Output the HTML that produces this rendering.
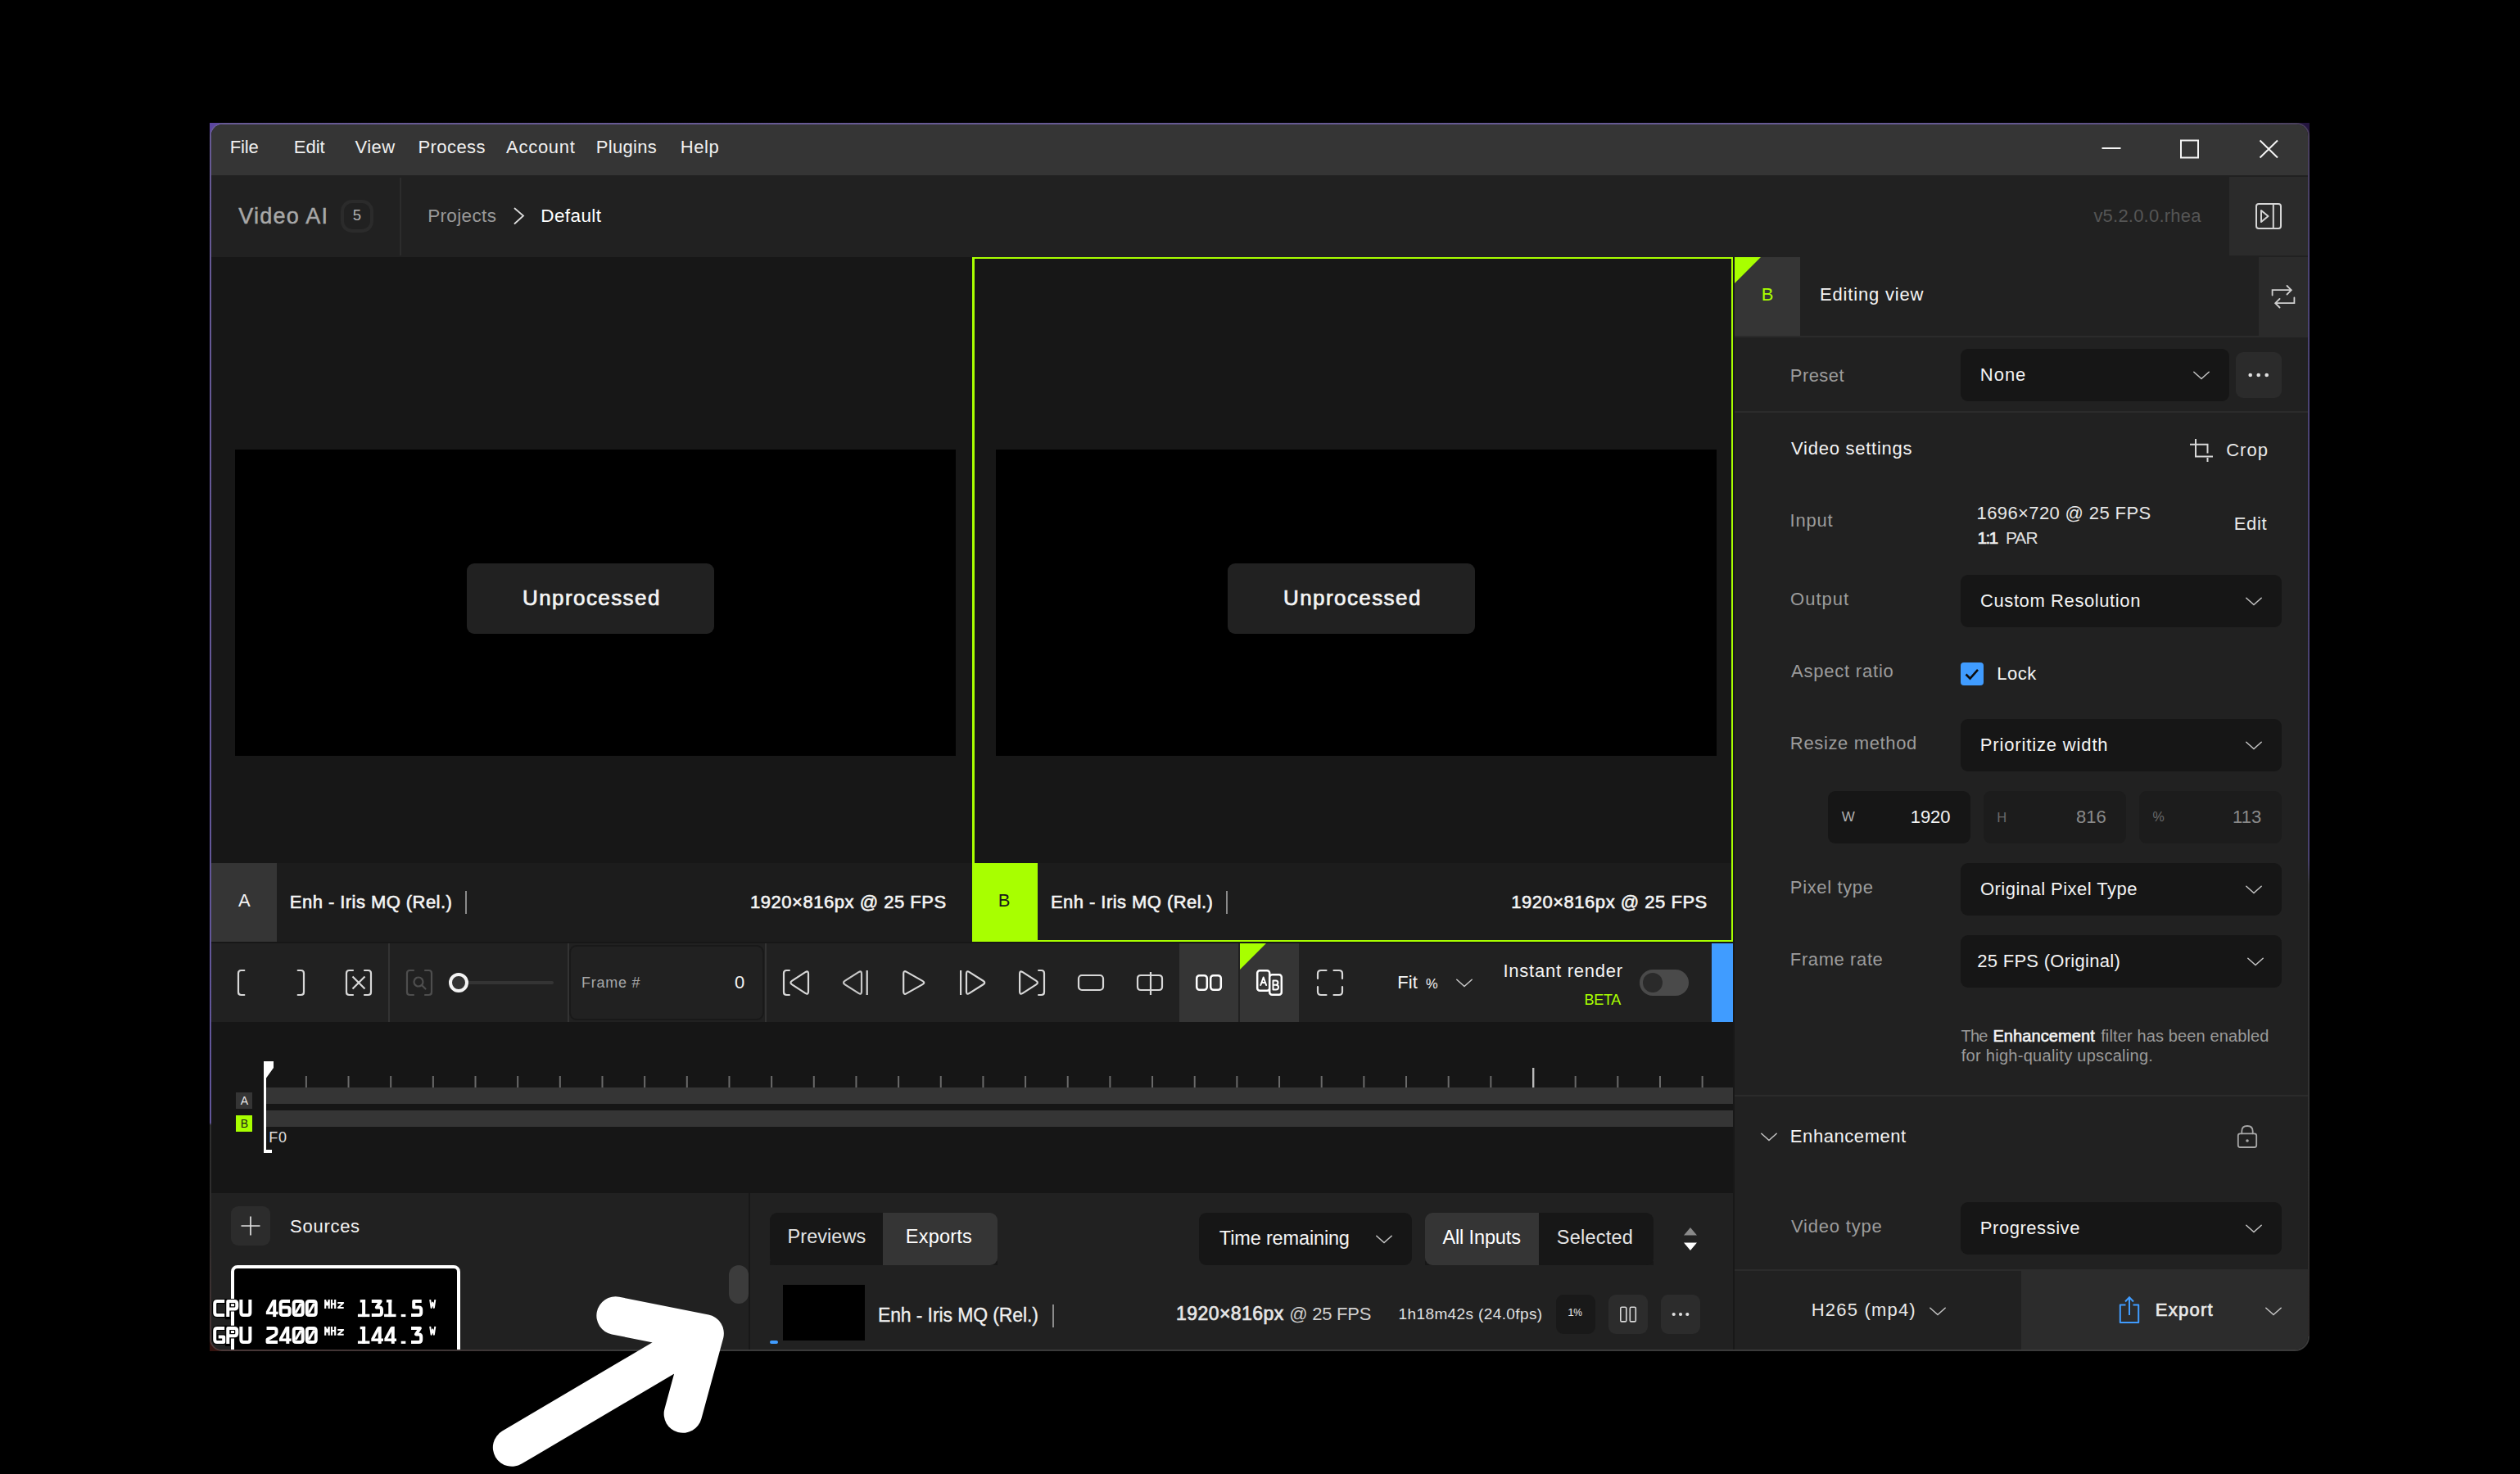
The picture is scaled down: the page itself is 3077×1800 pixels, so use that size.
<!DOCTYPE html>
<html><head><meta charset="utf-8"><title>Video AI</title>
<style>
html,body{margin:0;padding:0;background:#000;}
body{width:3077px;height:1800px;position:relative;overflow:hidden;font-family:"Liberation Sans",sans-serif;}
.a{position:absolute;box-sizing:border-box;}
.t{position:absolute;line-height:1;white-space:pre;}
#winb{position:absolute;left:256px;top:150px;width:2564px;height:1500px;border-radius:16px 16px 18px 15px;background:linear-gradient(90deg,#675a94 0%,#655992 85%,#554a78 95%,#483e58 100%) 0 0/100% 16px no-repeat,linear-gradient(90deg,#4a3838 0%,#403434 8%,#3a3a3a 20%,#3a3a3a 100%) 0 100%/100% 18px no-repeat,linear-gradient(180deg,#675a94 0%,#62569a 81.4%,#2e2e2e 81.6%,#2e2c2c 90%,#4a3636 100%) 0 0/16px 100% no-repeat,linear-gradient(180deg,#483e58 0%,#4c4474 12%,#4a4270 60%,#363638 62%,#323232 85%,#2e2a2a 100%) 100% 0/18px 100% no-repeat;}
.cn{position:absolute;width:16px;height:16px;}
#win{position:absolute;left:256px;top:150px;width:2564px;height:1500px;overflow:hidden;clip-path:inset(2px 2px 2px 2px round 14px 14px 16px 13px);}
</style></head><body>
<div class="cn" style="left:256px;top:150px;background:#5c46a0"></div><div class="cn" style="left:2804px;top:150px;background:#24153f"></div><div class="cn" style="left:256px;top:1634px;background:#35130f"></div>
<div id="winb"></div>
<div id="win">
<div class="a" style="left:0px;top:0px;width:2564px;height:1500px;background:#171717;"></div>
<div class="a" style="left:0px;top:0px;width:2564px;height:64px;background:#353535;"></div>
<div class="a" style="left:0px;top:64px;width:2564px;height:100px;background:#212121;"></div>
<div class="t" style="left:24.65px;top:18.78px;font-size:22px;color:#f0f0f0;letter-spacing:-0.158px;">File</div>
<div class="t" style="left:102.75px;top:18.78px;font-size:22px;color:#f0f0f0;">Edit</div>
<div class="t" style="left:177.60px;top:18.78px;font-size:22px;color:#f0f0f0;letter-spacing:0.408px;">View</div>
<div class="t" style="left:254.55px;top:18.78px;font-size:22px;color:#f0f0f0;letter-spacing:0.400px;">Process</div>
<div class="t" style="left:362.00px;top:18.78px;font-size:22px;color:#f0f0f0;letter-spacing:0.737px;">Account</div>
<div class="t" style="left:471.75px;top:18.78px;font-size:22px;color:#f0f0f0;letter-spacing:0.296px;">Plugins</div>
<div class="t" style="left:574.85px;top:18.78px;font-size:22px;color:#f0f0f0;letter-spacing:0.525px;">Help</div>
<svg class="a" style="left:2304px;top:10px;" width="240" height="44" viewBox="0 0 240 44" fill="none" stroke-linecap="round" stroke-linejoin="round"><g stroke="#f4f4f4" stroke-width="2" stroke-linecap="butt" stroke-linejoin="miter"><path d="M6.5 21H29.5"/><rect x="103" y="11.5" width="21" height="21"/><path d="M199.5 11.5L221 32.5M221 11.5L199.5 32.5"/></g></svg>
<div class="t" style="left:35.27px;top:101.24px;font-size:27px;color:#a8a8a8;letter-spacing:1.225px;-webkit-text-stroke:0.5px currentColor;">Video AI</div>
<div class="a" style="left:160px;top:94px;width:40px;height:40px;background:transparent;border-radius:14px;border:4px solid #2b2b2b;"></div>
<div class="t" style="left:174.67px;top:104.24px;font-size:18.5px;color:#b0b0b0;">5</div>
<div class="a" style="left:232px;top:67px;width:2px;height:95px;background:#2c2c2c;"></div>
<div class="t" style="left:266.15px;top:102.65px;font-size:22.5px;color:#999;letter-spacing:0.364px;">Projects</div>
<svg class="a" style="left:368px;top:100px;" width="20" height="28" viewBox="0 0 20 28" fill="none" stroke-linecap="round" stroke-linejoin="round"><path d="M4.5 4.5L15 13.5L4.5 23" stroke="#ddd" stroke-width="1.8" stroke-linejoin="miter"/></svg>
<div class="t" style="left:404.25px;top:102.65px;font-size:22.5px;color:#fff;letter-spacing:0.404px;">Default</div>
<div class="t" style="left:2300.40px;top:102.68px;font-size:22px;color:#555;letter-spacing:0.217px;">v5.2.0.0.rhea</div>
<div class="a" style="left:2466px;top:66px;width:96px;height:96px;background:#2b2b2b;"></div>
<svg class="a" style="left:2496px;top:96px;" width="36" height="36" viewBox="0 0 36 36" fill="none" stroke-linecap="round" stroke-linejoin="round"><g stroke="#d6d6d6" stroke-width="2"><rect x="3" y="3" width="30" height="30" rx="3"/><path d="M23.800 3V33"/><path d="M9 11L17.500 18L9 25Z"/></g></svg>
<div class="a" style="left:31px;top:399px;width:880px;height:374px;background:#000;"></div>
<div class="a" style="left:314px;top:538px;width:302px;height:86px;background:#212121;border-radius:9px;"></div>
<div class="t" style="left:382.00px;top:567.09px;font-size:26px;color:#f4f4f4;letter-spacing:1.417px;-webkit-text-stroke:0.7px currentColor;">Unprocessed</div>
<div class="a" style="left:960px;top:399px;width:880px;height:374px;background:#000;"></div>
<div class="a" style="left:1243px;top:538px;width:302px;height:86px;background:#212121;border-radius:9px;"></div>
<div class="t" style="left:1311.00px;top:567.09px;font-size:26px;color:#f4f4f4;letter-spacing:1.417px;-webkit-text-stroke:0.7px currentColor;">Unprocessed</div>
<div class="a" style="left:931px;top:164px;width:929px;height:2px;background:#a8ff00;"></div>
<div class="a" style="left:931px;top:164px;width:2.5px;height:836px;background:#a8ff00;"></div>
<div class="a" style="left:1857.5px;top:164px;width:2.5px;height:836px;background:#a8ff00;"></div>
<div class="a" style="left:2px;top:904px;width:1858px;height:96px;background:#1c1c1c;"></div>
<div class="a" style="left:2px;top:904px;width:80px;height:96px;background:#353535;"></div>
<div class="a" style="left:931px;top:904px;width:80px;height:96px;background:#a8ff00;"></div>
<div class="a" style="left:931px;top:998px;width:929px;height:2px;background:#a8ff00;"></div>
<div class="a" style="left:1857.5px;top:904px;width:2.5px;height:96px;background:#a8ff00;"></div>
<div class="t" style="left:34.90px;top:938.88px;font-size:22px;color:#f4f4f4;">A</div>
<div class="t" style="left:962.75px;top:938.88px;font-size:22px;color:#1a1a1a;">B</div>
<div class="t" style="left:97.85px;top:940.78px;font-size:22px;color:#f4f4f4;letter-spacing:0.449px;-webkit-text-stroke:0.6px currentColor;">Enh - Iris MQ (Rel.)</div>
<div class="a" style="left:312px;top:938px;width:2px;height:28px;background:#8a8a8a;"></div>
<div class="t" style="left:660.08px;top:940.78px;font-size:22px;color:#f4f4f4;letter-spacing:0.526px;-webkit-text-stroke:0.6px currentColor;">1920×816px @ 25 FPS</div>
<div class="t" style="left:1026.95px;top:940.78px;font-size:22px;color:#f4f4f4;letter-spacing:0.449px;-webkit-text-stroke:0.6px currentColor;">Enh - Iris MQ (Rel.)</div>
<div class="a" style="left:1241.1px;top:938px;width:2px;height:28px;background:#8a8a8a;"></div>
<div class="t" style="left:1589.18px;top:940.78px;font-size:22px;color:#f4f4f4;letter-spacing:0.526px;-webkit-text-stroke:0.6px currentColor;">1920×816px @ 25 FPS</div>
<div class="a" style="left:2px;top:1002px;width:1858px;height:96px;background:#212121;"></div>
<div class="a" style="left:218px;top:1002px;width:2px;height:96px;background:#333;"></div>
<div class="a" style="left:437px;top:1002px;width:2px;height:96px;background:#333;"></div>
<div class="a" style="left:678px;top:1002px;width:2px;height:96px;background:#333;"></div>
<div class="a" style="left:439px;top:1004px;width:238px;height:92px;background:#212121;border-radius:9px;border:2px solid #191919;"></div>
<svg class="a" style="left:20.5px;top:1032px;" width="36" height="36" viewBox="0 0 36 36" fill="none" stroke-linecap="round" stroke-linejoin="round"><g stroke="#d8d8d8" stroke-width="2.2" transform="translate(2 2)"><path d="M19.300 1H15.500Q12 1 12 4.500V27.500Q12 31 15.500 31H19.300"/></g></svg>
<svg class="a" style="left:92.5px;top:1032px;" width="36" height="36" viewBox="0 0 36 36" fill="none" stroke-linecap="round" stroke-linejoin="round"><g stroke="#d8d8d8" stroke-width="2.2" transform="translate(2 2)"><path d="M12.700 1H16.500Q20 1 20 4.500V27.500Q20 31 16.500 31H12.700"/></g></svg>
<svg class="a" style="left:164px;top:1032px;" width="36" height="36" viewBox="0 0 36 36" fill="none" stroke-linecap="round" stroke-linejoin="round"><g stroke="#d8d8d8" stroke-width="2.2" transform="translate(2 2)"><path d="M9 1H4.5Q1 1 1 4.5V27.5Q1 31 4.5 31H9"/><path d="M23 1H27.5Q31 1 31 4.5V27.5Q31 31 27.5 31H23"/><path d="M8.5 8.5L23.5 23.5M23.5 8.5L8.5 23.5" stroke-linecap="butt"/></g></svg>
<svg class="a" style="left:238px;top:1032px;" width="36" height="36" viewBox="0 0 36 36" fill="none" stroke-linecap="round" stroke-linejoin="round"><g stroke="#4e4e4e" stroke-width="2.2" transform="translate(2 2)"><path d="M9 1H4.5Q1 1 1 4.5V27.5Q1 31 4.5 31H9"/><path d="M23 1H27.5Q31 1 31 4.5V27.5Q31 31 27.5 31H23"/><circle cx="15" cy="15" r="5.5"/><path d="M19.5 19.5L23.5 23.5"/></g></svg>
<div class="a" style="left:304px;top:1048px;width:116px;height:4px;background:#343434;border-radius:2px;"></div>
<div class="a" style="left:292px;top:1038px;width:24px;height:24px;border-radius:50%;background:#333;border:4.5px solid #f4f4f4;"></div>
<div class="t" style="left:454.02px;top:1041.26px;font-size:18px;color:#a8a8a8;letter-spacing:0.746px;">Frame #</div>
<div class="t" style="left:641.05px;top:1038.98px;font-size:22px;color:#f4f4f4;">0</div>
<svg class="a" style="left:698px;top:1032px;" width="36" height="36" viewBox="0 0 36 36" fill="none" stroke-linecap="round" stroke-linejoin="round"><g stroke="#d8d8d8" stroke-width="2.2" transform="translate(2 2)"><path d="M7.900 1H4.500Q1 1 1 4.500V27.500Q1 31 4.500 31H7.900"/><path d="M11.21 18.34Q7.60 16.00 11.21 13.66L27.39 3.14Q31.00 0.80 31.00 5.10L31.00 26.90Q31.00 31.20 27.39 28.86Z"/></g></svg>
<svg class="a" style="left:770px;top:1032px;" width="36" height="36" viewBox="0 0 36 36" fill="none" stroke-linecap="round" stroke-linejoin="round"><g stroke="#d8d8d8" stroke-width="2.2" transform="translate(2 2)"><path d="M3.82 18.31Q0.20 16.00 3.82 13.69L20.38 3.11Q24.00 0.80 24.00 5.10L24.00 26.90Q24.00 31.20 20.38 28.89Z" stroke="#c8c8c8"/><path d="M30.700 1V31" stroke-linecap="butt"/></g></svg>
<svg class="a" style="left:842px;top:1032px;" width="36" height="36" viewBox="0 0 36 36" fill="none" stroke-linecap="round" stroke-linejoin="round"><g stroke="#d8d8d8" stroke-width="2.2" transform="translate(2 2)"><path d="M26.45 18.11Q30.20 16.00 26.45 13.89L6.95 2.91Q3.20 0.80 3.20 5.10L3.20 26.90Q3.20 31.20 6.95 29.09Z"/></g></svg>
<svg class="a" style="left:914px;top:1032px;" width="36" height="36" viewBox="0 0 36 36" fill="none" stroke-linecap="round" stroke-linejoin="round"><g stroke="#d8d8d8" stroke-width="2.2" transform="translate(2 2)"><path d="M1.100 1V31" stroke-linecap="butt"/><path d="M28.46 18.29Q32.10 16.00 28.46 13.71L11.64 3.09Q8.00 0.80 8.00 5.10L8.00 26.90Q8.00 31.20 11.64 28.91Z"/></g></svg>
<svg class="a" style="left:986px;top:1032px;" width="36" height="36" viewBox="0 0 36 36" fill="none" stroke-linecap="round" stroke-linejoin="round"><g stroke="#d8d8d8" stroke-width="2.2" transform="translate(2 2)"><path d="M24.100 1H27.500Q31 1 31 4.500V27.500Q31 31 27.500 31H24.100"/><path d="M21.08 18.33Q24.70 16.00 21.08 13.67L4.72 3.13Q1.10 0.80 1.10 5.10L1.10 26.90Q1.10 31.20 4.72 28.87Z"/></g></svg>
<svg class="a" style="left:1058px;top:1032px;" width="36" height="36" viewBox="0 0 36 36" fill="none" stroke-linecap="round" stroke-linejoin="round"><g stroke="#d8d8d8" stroke-width="2.2" transform="translate(2 2)"><rect x="1" y="7" width="30" height="18" rx="4"/></g></svg>
<svg class="a" style="left:1130px;top:1032px;" width="36" height="36" viewBox="0 0 36 36" fill="none" stroke-linecap="round" stroke-linejoin="round"><g stroke="#d8d8d8" stroke-width="2.2" transform="translate(2 2)"><path d="M17 7H5Q1 7 1 11V21Q1 25 5 25H17"/><path d="M17 7H27Q31 7 31 11V21Q31 25 27 25H17"/><path d="M17 3V31" stroke-linecap="butt"/></g></svg>
<div class="a" style="left:1184px;top:1002px;width:72px;height:96px;background:#353535;"></div>
<div class="a" style="left:1258px;top:1002px;width:72px;height:96px;background:#353535;"></div>
<svg class="a" style="left:1202px;top:1032px;" width="36" height="36" viewBox="0 0 36 36" fill="none" stroke-linecap="round" stroke-linejoin="round"><g stroke="#fff" stroke-width="2.5" transform="translate(2 2)"><rect x="1.200" y="7.200" width="12.6" height="17.6" rx="3.5"/><rect x="18.2" y="7.2" width="12.6" height="17.6" rx="3.5"/></g></svg>
<svg class="a" style="left:1258px;top:1002px" width="32" height="32" viewBox="0 0 32 32"><path d="M0 0H32L0 32Z" fill="#a8ff00"/></svg>
<svg class="a" style="left:1276px;top:1032px;" width="36" height="36" viewBox="0 0 36 36" fill="none" stroke-linecap="round" stroke-linejoin="round"><g stroke="#fff" stroke-width="2.5" transform="translate(2 2)"><rect x="1.200" y="1.200" width="15" height="24.6" rx="3"/><rect x="16.2" y="6.2" width="14.6" height="24.6" rx="3" fill="#353535"/><path d="M5.300 19L8.700 9.500L12.100 19M6.400 16H11" stroke-width="2"/><path d="M20.500 24.500V13.500H24Q26.400 13.500 26.400 16.100Q26.400 18.600 24 18.700H20.500M24 18.700Q27 18.800 27 21.600Q27 24.500 24 24.500H20.500" stroke-width="2"/></g></svg>
<svg class="a" style="left:1350px;top:1032px;" width="36" height="36" viewBox="0 0 36 36" fill="none" stroke-linecap="round" stroke-linejoin="round"><g stroke="#d8d8d8" stroke-width="2.2" transform="translate(2 2)"><path d="M1 11V5Q1 1 5 1H11.500M20.500 1H27Q31 1 31 5V11M31 21V27Q31 31 27 31H20.500M11.500 31H5Q1 31 1 27V21"/></g></svg>
<div class="t" style="left:1450.15px;top:1038.98px;font-size:22px;color:#f4f4f4;letter-spacing:0.137px;">Fit</div>
<div class="t" style="left:1485.10px;top:1043.23px;font-size:16.5px;color:#f4f4f4;">%</div>
<svg class="a" style="left:1520px;top:1042px;" width="24" height="16" viewBox="0 0 24 16" fill="none" stroke-linecap="round" stroke-linejoin="round"><path d="M2.800 4.200L12 12.600L21.200 4.200" stroke="#c8c8c8" stroke-width="1.500" stroke-linejoin="miter"/></svg>
<div class="t" style="left:1579.40px;top:1024.98px;font-size:22px;color:#f4f4f4;letter-spacing:0.771px;">Instant render</div>
<div class="t" style="left:1678.62px;top:1062.06px;font-size:18px;color:#a8ff00;letter-spacing:-0.350px;">BETA</div>
<div class="a" style="left:1746px;top:1034px;width:60px;height:32px;background:#4a4a4a;border-radius:16px;"></div>
<div class="a" style="left:1750px;top:1038px;width:24px;height:24px;background:#2a2a2a;border-radius:12px;"></div>
<div class="a" style="left:1834px;top:1002px;width:26px;height:96px;background:#409cff;"></div>
<div class="a" style="left:2px;top:1098px;width:1858px;height:209px;background:#161616;"></div>
<svg class="a" style="left:2px;top:1146px;" width="1858" height="32" viewBox="0 0 1858 32" fill="none" stroke-linecap="round" stroke-linejoin="round"><rect x="114.86" y="18" width="2" height="14" fill="#6a6a6a"/><rect x="166.52" y="18" width="2" height="14" fill="#6a6a6a"/><rect x="218.18" y="18" width="2" height="14" fill="#6a6a6a"/><rect x="269.84" y="18" width="2" height="14" fill="#6a6a6a"/><rect x="321.50" y="18" width="2" height="14" fill="#6a6a6a"/><rect x="373.16" y="18" width="2" height="14" fill="#6a6a6a"/><rect x="424.82" y="18" width="2" height="14" fill="#6a6a6a"/><rect x="476.48" y="18" width="2" height="14" fill="#6a6a6a"/><rect x="528.14" y="18" width="2" height="14" fill="#6a6a6a"/><rect x="579.80" y="18" width="2" height="14" fill="#6a6a6a"/><rect x="631.46" y="18" width="2" height="14" fill="#6a6a6a"/><rect x="683.12" y="18" width="2" height="14" fill="#6a6a6a"/><rect x="734.78" y="18" width="2" height="14" fill="#6a6a6a"/><rect x="786.44" y="18" width="2" height="14" fill="#6a6a6a"/><rect x="838.10" y="18" width="2" height="14" fill="#6a6a6a"/><rect x="889.76" y="18" width="2" height="14" fill="#6a6a6a"/><rect x="941.42" y="18" width="2" height="14" fill="#6a6a6a"/><rect x="993.08" y="18" width="2" height="14" fill="#6a6a6a"/><rect x="1044.74" y="18" width="2" height="14" fill="#6a6a6a"/><rect x="1096.40" y="18" width="2" height="14" fill="#6a6a6a"/><rect x="1148.06" y="18" width="2" height="14" fill="#6a6a6a"/><rect x="1199.72" y="18" width="2" height="14" fill="#6a6a6a"/><rect x="1251.38" y="18" width="2" height="14" fill="#6a6a6a"/><rect x="1303.04" y="18" width="2" height="14" fill="#6a6a6a"/><rect x="1354.70" y="18" width="2" height="14" fill="#6a6a6a"/><rect x="1406.36" y="18" width="2" height="14" fill="#6a6a6a"/><rect x="1458.02" y="18" width="2" height="14" fill="#6a6a6a"/><rect x="1509.68" y="18" width="2" height="14" fill="#6a6a6a"/><rect x="1561.34" y="18" width="2" height="14" fill="#6a6a6a"/><rect x="1613.00" y="8" width="2.4" height="24" fill="#b8b8b8"/><rect x="1664.66" y="18" width="2" height="14" fill="#6a6a6a"/><rect x="1716.32" y="18" width="2" height="14" fill="#6a6a6a"/><rect x="1767.98" y="18" width="2" height="14" fill="#6a6a6a"/><rect x="1819.64" y="18" width="2" height="14" fill="#6a6a6a"/></svg>
<div class="a" style="left:68px;top:1178px;width:1792px;height:20px;background:#353535;"></div>
<div class="a" style="left:68px;top:1206px;width:1792px;height:20px;background:#353535;"></div>
<div class="a" style="left:32px;top:1184px;width:20px;height:20px;background:#353535;"></div>
<div class="a" style="left:32px;top:1212px;width:20px;height:20px;background:#a8ff00;"></div>
<div class="t" style="left:37.70px;top:1187.35px;font-size:14px;color:#e8e8e8;">A</div>
<div class="t" style="left:37.68px;top:1215.35px;font-size:14px;color:#1a1a1a;">B</div>
<svg class="a" style="left:66px;top:1146px;" width="14" height="112" viewBox="0 0 14 112" fill="none" stroke-linecap="round" stroke-linejoin="round"><path d="M0 0H12V8L3 20.500V108H10V112H0Z" fill="#fff"/></svg>
<div class="t" style="left:72.23px;top:1230.26px;font-size:18px;color:#e0e0e0;letter-spacing:0.900px;">F0</div>
<div class="a" style="left:2px;top:1307px;width:1858px;height:193px;background:#212121;"></div>
<div class="a" style="left:658px;top:1307px;width:2px;height:193px;background:#181818;"></div>
<div class="a" style="left:26px;top:1323px;width:48px;height:48px;background:#2c2c2c;border-radius:9px;"></div>
<svg class="a" style="left:38px;top:1335px;" width="24" height="24" viewBox="0 0 24 24" fill="none" stroke-linecap="round" stroke-linejoin="round"><path d="M12 0.500V23.500M0.500 12H23.500" stroke="#e0e0e0" stroke-width="1.700" stroke-linecap="butt"/></svg>
<div class="t" style="left:98.10px;top:1336.68px;font-size:22px;color:#f4f4f4;letter-spacing:0.717px;">Sources</div>
<div class="a" style="left:26px;top:1395px;width:280px;height:115px;background:#000;border-radius:8px;border:4px solid #fff;"></div>
<div class="a" style="left:634px;top:1395px;width:24px;height:47px;background:#3c3c3c;border-radius:12px;"></div>
<div class="a" style="left:684px;top:1390px;width:278px;height:5px;background:#181818;"></div>
<div class="a" style="left:684px;top:1331px;width:278px;height:64px;background:#171717;border-radius:9px;"></div>
<div class="a" style="left:822px;top:1331px;width:140px;height:64px;background:#353535;border-radius:9px;border-top-left-radius:0;border-bottom-left-radius:0;"></div>
<div class="t" style="left:705.62px;top:1348.91px;font-size:23.5px;color:#e4e4e4;letter-spacing:0.036px;">Previews</div>
<div class="t" style="left:849.83px;top:1348.91px;font-size:23.5px;color:#fff;letter-spacing:0.200px;">Exports</div>
<div class="a" style="left:1208px;top:1331px;width:260px;height:64px;background:#161616;border-radius:9px;"></div>
<div class="t" style="left:1232.80px;top:1350.91px;font-size:23.5px;color:#f4f4f4;letter-spacing:-0.148px;">Time remaining</div>
<svg class="a" style="left:1422px;top:1355px;" width="24" height="16" viewBox="0 0 24 16" fill="none" stroke-linecap="round" stroke-linejoin="round"><path d="M2.800 4.200L12 12.600L21.200 4.200" stroke="#c8c8c8" stroke-width="1.500" stroke-linejoin="miter"/></svg>
<div class="a" style="left:1484px;top:1390px;width:279px;height:5px;background:#181818;"></div>
<div class="a" style="left:1484px;top:1331px;width:279px;height:64px;background:#171717;border-radius:9px;"></div>
<div class="a" style="left:1484px;top:1331px;width:139px;height:64px;background:#353535;border-radius:9px;border-top-right-radius:0;border-bottom-right-radius:0;"></div>
<div class="t" style="left:1505.40px;top:1349.51px;font-size:23.5px;color:#fff;letter-spacing:-0.119px;">All Inputs</div>
<div class="t" style="left:1644.80px;top:1349.51px;font-size:23.5px;color:#e4e4e4;letter-spacing:0.214px;">Selected</div>
<svg class="a" style="left:1798px;top:1347px;" width="20" height="32" viewBox="0 0 20 32" fill="none" stroke-linecap="round" stroke-linejoin="round"><path d="M2 11.500L10 2L18 11.500Z" fill="#8a8a8a"/><path d="M2 20.500L10 30L18 20.500Z" fill="#fff"/></svg>
<div class="a" style="left:700px;top:1419px;width:100px;height:68px;background:#000;"></div>
<div class="a" style="left:684px;top:1487px;width:10px;height:4px;background:#409cff;border-radius:2px;"></div>
<div class="t" style="left:815.92px;top:1444.93px;font-size:23px;color:#f0f0f0;letter-spacing:-0.108px;-webkit-text-stroke:0.3px currentColor;">Enh - Iris MQ (Rel.)</div>
<div class="a" style="left:1029px;top:1443px;width:2px;height:28px;background:#8a8a8a;"></div>
<div class="t" style="left:1179.95px;top:1442.83px;font-size:23px;color:#e6e6e6;letter-spacing:0.450px;-webkit-text-stroke:0.7px currentColor;">1920×816px</div>
<div class="t" style="left:1318.28px;top:1443.68px;font-size:22px;color:#d0d0d0;letter-spacing:-0.236px;">@ 25 FPS</div>
<div class="t" style="left:1451.62px;top:1444.72px;font-size:19px;color:#e0e0e0;letter-spacing:0.382px;">1h18m42s (24.0fps)</div>
<div class="a" style="left:1644px;top:1431px;width:48px;height:48px;background:#191919;border-radius:9px;"></div>
<div class="t" style="left:1658.20px;top:1445.57px;font-size:13.5px;color:#e8e8e8;">1</div>
<div class="t" style="left:1665.33px;top:1446.64px;font-size:12px;color:#e8e8e8;">%</div>
<div class="a" style="left:1708px;top:1431px;width:48px;height:48px;background:#2c2c2c;border-radius:9px;"></div>
<svg class="a" style="left:1720px;top:1443px;" width="24" height="24" viewBox="0 0 24 24" fill="none" stroke-linecap="round" stroke-linejoin="round"><rect x="2.800" y="3.300" width="7" height="17.600" rx="1.500" stroke="#d8d8d8" stroke-width="1.600"/><rect x="14.300" y="3.300" width="7" height="17.600" rx="1.500" stroke="#d8d8d8" stroke-width="1.600"/></svg>
<div class="a" style="left:1772px;top:1431px;width:48px;height:48px;background:#2c2c2c;border-radius:9px;"></div>
<svg class="a" style="left:1784px;top:1449px;" width="24" height="12" viewBox="0 0 24 12" fill="none" stroke-linecap="round" stroke-linejoin="round"><circle cx="3.700" cy="6" r="2.100" fill="#e0e0e0"/><circle cx="12" cy="6" r="2.100" fill="#e0e0e0"/><circle cx="20.300" cy="6" r="2.100" fill="#e0e0e0"/></svg>
<div class="a" style="left:1860px;top:164px;width:2px;height:1336px;background:#181818;"></div>
<div class="a" style="left:1862px;top:164px;width:702px;height:1336px;background:#212121;"></div>
<div class="a" style="left:1862px;top:164px;width:80px;height:96px;background:#353535;"></div>
<svg class="a" style="left:1862px;top:164px" width="32" height="32" viewBox="0 0 32 32"><path d="M0 0H32L0 32Z" fill="#a8ff00"/></svg>
<div class="t" style="left:1894.65px;top:198.78px;font-size:22px;color:#a8ff00;">B</div>
<div class="t" style="left:1966.05px;top:198.78px;font-size:22px;color:#f4f4f4;letter-spacing:0.814px;">Editing view</div>
<div class="a" style="left:2502px;top:164px;width:62px;height:96px;background:#2b2b2b;"></div>
<div class="a" style="left:1862px;top:260px;width:702px;height:2px;background:#2b2b2b;"></div>
<svg class="a" style="left:2516px;top:196px;" width="32" height="32" viewBox="0 0 32 32" fill="none" stroke-linecap="round" stroke-linejoin="round"><g stroke="#d0d0d0" stroke-width="1.800" stroke-linejoin="miter"><path d="M2.600 14.500V8.200H25.500M20.500 3L25.800 8.200L20.500 13.500"/><path d="M29.400 17.500V24.200H6.500M11.500 19L6.200 24.200L11.500 29.500"/></g></svg>
<div class="t" style="left:1929.85px;top:298.28px;font-size:22px;color:#9c9c9c;letter-spacing:0.430px;">Preset</div>
<div class="a" style="left:2138px;top:276px;width:328px;height:64px;background:#161616;border-radius:9px;"></div>
<div class="t" style="left:2161.85px;top:296.88px;font-size:22px;color:#f4f4f4;letter-spacing:0.967px;">None</div>
<svg class="a" style="left:2420px;top:300px;" width="24" height="16" viewBox="0 0 24 16" fill="none" stroke-linecap="round" stroke-linejoin="round"><path d="M2.800 4.200L12 12.600L21.200 4.200" stroke="#c4c4c4" stroke-width="1.500" stroke-linejoin="miter"/></svg>
<div class="a" style="left:2474px;top:280px;width:56px;height:56px;background:#2b2b2b;border-radius:9px;"></div>
<svg class="a" style="left:2488px;top:302px;" width="28" height="12" viewBox="0 0 28 12" fill="none" stroke-linecap="round" stroke-linejoin="round"><circle cx="3.700" cy="6" r="2.300" fill="#e0e0e0"/><circle cx="13.700" cy="6" r="2.300" fill="#e0e0e0"/><circle cx="23.700" cy="6" r="2.300" fill="#e0e0e0"/></svg>
<div class="a" style="left:1862px;top:351.5px;width:702px;height:2px;background:#2b2b2b;"></div>
<div class="t" style="left:1931.00px;top:386.98px;font-size:22px;color:#f4f4f4;letter-spacing:0.752px;">Video settings</div>
<svg class="a" style="left:2416px;top:384px;" width="32" height="32" viewBox="0 0 32 32" fill="none" stroke-linecap="round" stroke-linejoin="round"><g stroke="#d8d8d8" stroke-width="2" stroke-linecap="butt" stroke-linejoin="miter"><path d="M9 2V23.500H30"/><path d="M2 8.700H23.500V19.500M23.500 25V30"/></g></svg>
<div class="t" style="left:2462.20px;top:389.48px;font-size:22px;color:#e8e8e8;letter-spacing:1.042px;">Crop</div>
<div class="t" style="left:1929.60px;top:475.28px;font-size:22px;color:#9c9c9c;letter-spacing:0.756px;">Input</div>
<div class="t" style="left:2157.57px;top:465.58px;font-size:22px;color:#e8e8e8;letter-spacing:0.383px;">1696×720 @ 25 FPS</div>
<div class="t" style="left:2158.50px;top:496.22px;font-size:21px;color:#f0f0f0;letter-spacing:-1.775px;-webkit-text-stroke:0.6px currentColor;">1:1</div>
<div class="t" style="left:2192.88px;top:496.22px;font-size:21px;color:#e0e0e0;letter-spacing:-0.963px;">PAR</div>
<div class="t" style="left:2471.75px;top:478.78px;font-size:22px;color:#e8e8e8;letter-spacing:0.667px;">Edit</div>
<div class="a" style="left:2138px;top:552px;width:392px;height:64px;background:#161616;border-radius:9px;"></div>
<div class="t" style="left:1930.00px;top:570.98px;font-size:22px;color:#9c9c9c;letter-spacing:1.025px;">Output</div>
<div class="t" style="left:2162.00px;top:573.08px;font-size:22px;color:#f4f4f4;letter-spacing:0.594px;">Custom Resolution</div>
<svg class="a" style="left:2484px;top:576px;" width="24" height="16" viewBox="0 0 24 16" fill="none" stroke-linecap="round" stroke-linejoin="round"><path d="M2.800 4.200L12 12.600L21.200 4.200" stroke="#c4c4c4" stroke-width="1.500" stroke-linejoin="miter"/></svg>
<div class="t" style="left:1931.00px;top:659.08px;font-size:22px;color:#9c9c9c;letter-spacing:0.784px;">Aspect ratio</div>
<div class="a" style="left:2138px;top:659px;width:28px;height:28px;background:#409cff;border-radius:4px;"></div>
<svg class="a" style="left:2138px;top:659px;" width="28" height="28" viewBox="0 0 28 28" fill="none" stroke-linecap="round" stroke-linejoin="round"><path d="M6.500 14.500L11.500 19.500L21 8.800" stroke="#0d0d0d" stroke-width="2.600" stroke-linejoin="miter" stroke-linecap="butt"/></svg>
<div class="t" style="left:2182.25px;top:661.78px;font-size:22px;color:#f4f4f4;letter-spacing:0.542px;">Lock</div>
<div class="a" style="left:2138px;top:728px;width:392px;height:64px;background:#161616;border-radius:9px;"></div>
<div class="t" style="left:1929.85px;top:746.88px;font-size:22px;color:#9c9c9c;letter-spacing:0.648px;">Resize method</div>
<div class="t" style="left:2161.85px;top:748.68px;font-size:22px;color:#f4f4f4;letter-spacing:0.847px;">Prioritize width</div>
<svg class="a" style="left:2484px;top:752px;" width="24" height="16" viewBox="0 0 24 16" fill="none" stroke-linecap="round" stroke-linejoin="round"><path d="M2.800 4.200L12 12.600L21.200 4.200" stroke="#c4c4c4" stroke-width="1.500" stroke-linejoin="miter"/></svg>
<div class="a" style="left:1976px;top:816px;width:174px;height:64px;background:#161616;border-radius:9px;"></div>
<div class="a" style="left:2166px;top:816px;width:174px;height:64px;background:#1c1c1c;border-radius:9px;"></div>
<div class="a" style="left:2356px;top:816px;width:174px;height:64px;background:#1c1c1c;border-radius:9px;"></div>
<div class="t" style="left:1992.70px;top:839.21px;font-size:17px;color:#b0b0b0;">W</div>
<div class="t" style="left:2076.65px;top:837.38px;font-size:22px;color:#f4f4f4;">1920</div>
<div class="t" style="left:2182.35px;top:839.63px;font-size:16.5px;color:#6a6a6a;">H</div>
<div class="t" style="left:2279.03px;top:837.38px;font-size:22px;color:#8a8a8a;">816</div>
<div class="t" style="left:2372.50px;top:840.06px;font-size:16px;color:#6a6a6a;">%</div>
<div class="t" style="left:2470.05px;top:837.38px;font-size:22px;color:#8a8a8a;">113</div>
<div class="a" style="left:2138px;top:904px;width:392px;height:64px;background:#161616;border-radius:9px;"></div>
<div class="t" style="left:1929.85px;top:922.78px;font-size:22px;color:#9c9c9c;letter-spacing:0.628px;">Pixel type</div>
<div class="t" style="left:2162.00px;top:925.08px;font-size:22px;color:#f4f4f4;letter-spacing:0.465px;">Original Pixel Type</div>
<svg class="a" style="left:2484px;top:928px;" width="24" height="16" viewBox="0 0 24 16" fill="none" stroke-linecap="round" stroke-linejoin="round"><path d="M2.800 4.200L12 12.600L21.200 4.200" stroke="#c4c4c4" stroke-width="1.500" stroke-linejoin="miter"/></svg>
<div class="a" style="left:2138px;top:992px;width:392px;height:64px;background:#161616;border-radius:9px;"></div>
<div class="t" style="left:1929.85px;top:1010.98px;font-size:22px;color:#9c9c9c;letter-spacing:0.600px;">Frame rate</div>
<div class="t" style="left:2158.20px;top:1013.28px;font-size:22px;color:#f4f4f4;letter-spacing:0.292px;">25 FPS (Original)</div>
<svg class="a" style="left:2486px;top:1016px;" width="24" height="16" viewBox="0 0 24 16" fill="none" stroke-linecap="round" stroke-linejoin="round"><path d="M2.800 4.200L12 12.600L21.200 4.200" stroke="#c4c4c4" stroke-width="1.500" stroke-linejoin="miter"/></svg>
<div class="t" style="left:2138.62px;top:1105.07px;font-size:20px;color:#9a9a9a;letter-spacing:-0.875px;">The</div>
<div class="t" style="left:2177.38px;top:1105.07px;font-size:20px;color:#f4f4f4;letter-spacing:0.105px;-webkit-text-stroke:0.6px currentColor;">Enhancement</div>
<div class="t" style="left:2309.15px;top:1105.07px;font-size:20px;color:#9a9a9a;letter-spacing:0.128px;">filter has been enabled</div>
<div class="t" style="left:2138.75px;top:1128.57px;font-size:20px;color:#9a9a9a;letter-spacing:0.283px;">for high-quality upscaling.</div>
<div class="a" style="left:1862px;top:1187px;width:702px;height:2px;background:#2b2b2b;"></div>
<svg class="a" style="left:1892px;top:1230px;" width="24" height="16" viewBox="0 0 24 16" fill="none" stroke-linecap="round" stroke-linejoin="round"><path d="M2.800 4.200L12 12.600L21.200 4.200" stroke="#c4c4c4" stroke-width="1.500" stroke-linejoin="miter"/></svg>
<div class="t" style="left:1929.85px;top:1226.78px;font-size:22px;color:#f4f4f4;letter-spacing:0.562px;">Enhancement</div>
<svg class="a" style="left:2472px;top:1222px;" width="32" height="32" viewBox="0 0 32 32" fill="none" stroke-linecap="round" stroke-linejoin="round"><g stroke="#a8a8a8" stroke-width="1.800"><rect x="4.800" y="12.300" width="22.400" height="16.700" rx="2.500"/><path d="M9.300 12.300V9.500Q9.300 3 16 3Q22.700 3 22.700 9.500V12.300"/></g><circle cx="16" cy="21" r="1.800" fill="#a8a8a8"/></svg>
<div class="a" style="left:2138px;top:1318px;width:392px;height:64px;background:#161616;border-radius:9px;"></div>
<div class="t" style="left:1931.00px;top:1337.28px;font-size:22px;color:#9c9c9c;letter-spacing:0.806px;">Video type</div>
<div class="t" style="left:2161.85px;top:1339.18px;font-size:22px;color:#f4f4f4;letter-spacing:0.540px;">Progressive</div>
<svg class="a" style="left:2484px;top:1342px;" width="24" height="16" viewBox="0 0 24 16" fill="none" stroke-linecap="round" stroke-linejoin="round"><path d="M2.800 4.200L12 12.600L21.200 4.200" stroke="#c4c4c4" stroke-width="1.500" stroke-linejoin="miter"/></svg>
<div class="a" style="left:1862px;top:1400px;width:702px;height:2px;background:#2b2b2b;"></div>
<div class="a" style="left:2212px;top:1400px;width:352px;height:100px;background:#2c2c2c;"></div>
<div class="t" style="left:1955.75px;top:1439.38px;font-size:22px;color:#e8e8e8;letter-spacing:1.197px;">H265 (mp4)</div>
<svg class="a" style="left:2098px;top:1443px;" width="24" height="16" viewBox="0 0 24 16" fill="none" stroke-linecap="round" stroke-linejoin="round"><path d="M2.800 4.200L12 12.600L21.200 4.200" stroke="#c4c4c4" stroke-width="1.500" stroke-linejoin="miter"/></svg>
<svg class="a" style="left:2328px;top:1430px;" width="32" height="40" viewBox="0 0 32 40" fill="none" stroke-linecap="round" stroke-linejoin="round"><g stroke="#409cff" stroke-width="2" stroke-linecap="butt" stroke-linejoin="miter"><path d="M11.500 13.500H4.800V35H27.200V13.500H20.500" stroke-linejoin="round"/><path d="M16 26V4.500M11 9.500L16 4.300L21 9.500"/></g></svg>
<div class="t" style="left:2375.75px;top:1439.38px;font-size:22px;color:#e8e8e8;letter-spacing:1.250px;-webkit-text-stroke:0.7px currentColor;">Export</div>
<svg class="a" style="left:2508px;top:1443px;" width="24" height="16" viewBox="0 0 24 16" fill="none" stroke-linecap="round" stroke-linejoin="round"><path d="M2.800 4.200L12 12.600L21.200 4.200" stroke="#c4c4c4" stroke-width="1.500" stroke-linejoin="miter"/></svg>
</div>
<svg class="a" style="left:250px;top:1580px;" width="300" height="70" viewBox="0 0 300 70" fill="none" stroke-linecap="round" stroke-linejoin="round"><g stroke="#000" stroke-linecap="butt" stroke-linejoin="round"><path transform="translate(10.20 7.10)" d="M14 2H5Q2 2 2 5V16Q2 19 5 19H14" stroke-width="6.4" stroke-linecap="square"/><path transform="translate(26.28 7.10)" d="M2 21V2H10Q13 2 13 5V8.300Q13 11.300 10 11.300H2" stroke-width="6.4" stroke-linecap="square"/><path transform="translate(42.36 7.10)" d="M2 0V16Q2 19 5 19H10Q13 19 13 16V0" stroke-width="6.4" stroke-linecap="square"/><path transform="translate(74.52 7.10)" d="M10.700 0V21" stroke-width="6.4" stroke-linecap="square"/><path transform="translate(74.52 7.10)" d="M9.600 1.300L1.900 15.400" stroke-width="6" stroke-linecap="square"/><path transform="translate(74.52 7.10)" d="M0.300 16.300H15" stroke-width="5.8" stroke-linecap="square"/><path transform="translate(90.60 7.10)" d="M13.500 2H5Q2 2 2 5V16Q2 19 5 19H10Q13 19 13 16V12.500Q13 9.500 10 9.500H2" stroke-width="6.4" stroke-linecap="square"/><path transform="translate(106.68 7.10)" d="M5 2H10Q13 2 13 5V16Q13 19 10 19H5Q2 19 2 16V5Q2 2 5 2Z" stroke-width="6.4" stroke-linecap="square"/><path transform="translate(106.68 7.10)" d="M10.700 4.800L4.300 16.200" stroke-width="5.4" stroke-linecap="square"/><path transform="translate(122.76 7.10)" d="M5 2H10Q13 2 13 5V16Q13 19 10 19H5Q2 19 2 16V5Q2 2 5 2Z" stroke-width="6.4" stroke-linecap="square"/><path transform="translate(122.76 7.10)" d="M10.700 4.800L4.300 16.200" stroke-width="5.4" stroke-linecap="square"/><path transform="translate(146.10 7.10)" d="M1.100 10.800V0M5.600 10.800V0M1.100 1L3.350 6.500L5.600 1" stroke-width="4.6" stroke-linecap="square"/><path transform="translate(146.10 7.10)" d="M8.900 0V10.800M13.100 0V10.800M8.900 5.300H13.100" stroke-width="4.6" stroke-linecap="square"/><path transform="translate(146.10 7.10)" d="M16.200 4H23.100L16.700 9.800H23.600" stroke-width="4.4" stroke-linecap="square"/><path transform="translate(186.90 7.10)" d="M2.800 1.700H9.200" stroke-width="5.8" stroke-linecap="square"/><path transform="translate(186.90 7.10)" d="M7.200 0V21" stroke-width="6.4" stroke-linecap="square"/><path transform="translate(186.90 7.10)" d="M0 19.300H14.500" stroke-width="5.8" stroke-linecap="square"/><path transform="translate(202.98 7.10)" d="M0.800 2H11.700L6.800 9.500H10Q13 9.500 13 12.500V16Q13 19 10 19H0.800" stroke-width="6.4" stroke-linecap="square"/><path transform="translate(219.06 7.10)" d="M2.800 1.700H9.200" stroke-width="5.8" stroke-linecap="square"/><path transform="translate(219.06 7.10)" d="M7.200 0V21" stroke-width="6.4" stroke-linecap="square"/><path transform="translate(219.06 7.10)" d="M0 19.300H14.500" stroke-width="5.8" stroke-linecap="square"/><path transform="translate(235.14 7.10)" d="M4.600 19.400H10.200" stroke-width="5.6" stroke-linecap="square"/><path transform="translate(251.22 7.10)" d="M13.500 2H4V9.500H10Q13 9.500 13 12.500V16Q13 19 10 19H0.800" stroke-width="6.4" stroke-linecap="square"/><path transform="translate(274.20 7.10)" d="M1 0L2.400 9.800L4.050 3.500L5.700 9.800L7.100 0" stroke-width="4.4" stroke-linecap="square"/><path transform="translate(10.20 39.90)" d="M14 2H5Q2 2 2 5V16Q2 19 5 19H13V12.500H6.500" stroke-width="6.4" stroke-linecap="square"/><path transform="translate(26.28 39.90)" d="M2 21V2H10Q13 2 13 5V8.300Q13 11.300 10 11.300H2" stroke-width="6.4" stroke-linecap="square"/><path transform="translate(42.36 39.90)" d="M2 0V16Q2 19 5 19H10Q13 19 13 16V0" stroke-width="6.4" stroke-linecap="square"/><path transform="translate(74.52 39.90)" d="M1 2H10Q13 2 13 5V7.500Q13 9.500 11 10.700L2 15.800V19H14.500" stroke-width="6.4" stroke-linecap="square"/><path transform="translate(90.60 39.90)" d="M10.700 0V21" stroke-width="6.4" stroke-linecap="square"/><path transform="translate(90.60 39.90)" d="M9.600 1.300L1.900 15.400" stroke-width="6" stroke-linecap="square"/><path transform="translate(90.60 39.90)" d="M0.300 16.300H15" stroke-width="5.8" stroke-linecap="square"/><path transform="translate(106.68 39.90)" d="M5 2H10Q13 2 13 5V16Q13 19 10 19H5Q2 19 2 16V5Q2 2 5 2Z" stroke-width="6.4" stroke-linecap="square"/><path transform="translate(106.68 39.90)" d="M10.700 4.800L4.300 16.200" stroke-width="5.4" stroke-linecap="square"/><path transform="translate(122.76 39.90)" d="M5 2H10Q13 2 13 5V16Q13 19 10 19H5Q2 19 2 16V5Q2 2 5 2Z" stroke-width="6.4" stroke-linecap="square"/><path transform="translate(122.76 39.90)" d="M10.700 4.800L4.300 16.200" stroke-width="5.4" stroke-linecap="square"/><path transform="translate(146.10 39.90)" d="M1.100 10.800V0M5.600 10.800V0M1.100 1L3.350 6.500L5.600 1" stroke-width="4.6" stroke-linecap="square"/><path transform="translate(146.10 39.90)" d="M8.900 0V10.800M13.100 0V10.800M8.900 5.300H13.100" stroke-width="4.6" stroke-linecap="square"/><path transform="translate(146.10 39.90)" d="M16.200 4H23.100L16.700 9.800H23.600" stroke-width="4.4" stroke-linecap="square"/><path transform="translate(186.90 39.90)" d="M2.800 1.700H9.200" stroke-width="5.8" stroke-linecap="square"/><path transform="translate(186.90 39.90)" d="M7.200 0V21" stroke-width="6.4" stroke-linecap="square"/><path transform="translate(186.90 39.90)" d="M0 19.300H14.500" stroke-width="5.8" stroke-linecap="square"/><path transform="translate(202.98 39.90)" d="M10.700 0V21" stroke-width="6.4" stroke-linecap="square"/><path transform="translate(202.98 39.90)" d="M9.600 1.300L1.900 15.400" stroke-width="6" stroke-linecap="square"/><path transform="translate(202.98 39.90)" d="M0.300 16.300H15" stroke-width="5.8" stroke-linecap="square"/><path transform="translate(219.06 39.90)" d="M10.700 0V21" stroke-width="6.4" stroke-linecap="square"/><path transform="translate(219.06 39.90)" d="M9.600 1.300L1.900 15.400" stroke-width="6" stroke-linecap="square"/><path transform="translate(219.06 39.90)" d="M0.300 16.300H15" stroke-width="5.8" stroke-linecap="square"/><path transform="translate(235.14 39.90)" d="M4.600 19.400H10.200" stroke-width="5.6" stroke-linecap="square"/><path transform="translate(251.22 39.90)" d="M0.800 2H11.700L6.800 9.500H10Q13 9.500 13 12.500V16Q13 19 10 19H0.800" stroke-width="6.4" stroke-linecap="square"/><path transform="translate(274.20 39.90)" d="M1 0L2.400 9.800L4.050 3.500L5.700 9.800L7.100 0" stroke-width="4.4" stroke-linecap="square"/></g><g stroke="#fff" stroke-linecap="butt" stroke-linejoin="round"><path transform="translate(10.20 7.10)" d="M14 2H5Q2 2 2 5V16Q2 19 5 19H14" stroke-width="4"/><path transform="translate(26.28 7.10)" d="M2 21V2H10Q13 2 13 5V8.300Q13 11.300 10 11.300H2" stroke-width="4"/><path transform="translate(42.36 7.10)" d="M2 0V16Q2 19 5 19H10Q13 19 13 16V0" stroke-width="4"/><path transform="translate(74.52 7.10)" d="M10.700 0V21" stroke-width="4"/><path transform="translate(74.52 7.10)" d="M9.600 1.300L1.900 15.400" stroke-width="3.6"/><path transform="translate(74.52 7.10)" d="M0.300 16.300H15" stroke-width="3.4"/><path transform="translate(90.60 7.10)" d="M13.500 2H5Q2 2 2 5V16Q2 19 5 19H10Q13 19 13 16V12.500Q13 9.500 10 9.500H2" stroke-width="4"/><path transform="translate(106.68 7.10)" d="M5 2H10Q13 2 13 5V16Q13 19 10 19H5Q2 19 2 16V5Q2 2 5 2Z" stroke-width="4"/><path transform="translate(106.68 7.10)" d="M10.700 4.800L4.300 16.200" stroke-width="3"/><path transform="translate(122.76 7.10)" d="M5 2H10Q13 2 13 5V16Q13 19 10 19H5Q2 19 2 16V5Q2 2 5 2Z" stroke-width="4"/><path transform="translate(122.76 7.10)" d="M10.700 4.800L4.300 16.200" stroke-width="3"/><path transform="translate(146.10 7.10)" d="M1.100 10.800V0M5.600 10.800V0M1.100 1L3.350 6.500L5.600 1" stroke-width="2.2"/><path transform="translate(146.10 7.10)" d="M8.900 0V10.800M13.100 0V10.800M8.900 5.300H13.100" stroke-width="2.2"/><path transform="translate(146.10 7.10)" d="M16.200 4H23.100L16.700 9.800H23.600" stroke-width="2"/><path transform="translate(186.90 7.10)" d="M2.800 1.700H9.200" stroke-width="3.4"/><path transform="translate(186.90 7.10)" d="M7.200 0V21" stroke-width="4"/><path transform="translate(186.90 7.10)" d="M0 19.300H14.500" stroke-width="3.4"/><path transform="translate(202.98 7.10)" d="M0.800 2H11.700L6.800 9.500H10Q13 9.500 13 12.500V16Q13 19 10 19H0.800" stroke-width="4"/><path transform="translate(219.06 7.10)" d="M2.800 1.700H9.200" stroke-width="3.4"/><path transform="translate(219.06 7.10)" d="M7.200 0V21" stroke-width="4"/><path transform="translate(219.06 7.10)" d="M0 19.300H14.500" stroke-width="3.4"/><path transform="translate(235.14 7.10)" d="M4.600 19.400H10.200" stroke-width="3.2"/><path transform="translate(251.22 7.10)" d="M13.500 2H4V9.500H10Q13 9.500 13 12.500V16Q13 19 10 19H0.800" stroke-width="4"/><path transform="translate(274.20 7.10)" d="M1 0L2.400 9.800L4.050 3.500L5.700 9.800L7.100 0" stroke-width="2"/><path transform="translate(10.20 39.90)" d="M14 2H5Q2 2 2 5V16Q2 19 5 19H13V12.500H6.500" stroke-width="4"/><path transform="translate(26.28 39.90)" d="M2 21V2H10Q13 2 13 5V8.300Q13 11.300 10 11.300H2" stroke-width="4"/><path transform="translate(42.36 39.90)" d="M2 0V16Q2 19 5 19H10Q13 19 13 16V0" stroke-width="4"/><path transform="translate(74.52 39.90)" d="M1 2H10Q13 2 13 5V7.500Q13 9.500 11 10.700L2 15.800V19H14.500" stroke-width="4"/><path transform="translate(90.60 39.90)" d="M10.700 0V21" stroke-width="4"/><path transform="translate(90.60 39.90)" d="M9.600 1.300L1.900 15.400" stroke-width="3.6"/><path transform="translate(90.60 39.90)" d="M0.300 16.300H15" stroke-width="3.4"/><path transform="translate(106.68 39.90)" d="M5 2H10Q13 2 13 5V16Q13 19 10 19H5Q2 19 2 16V5Q2 2 5 2Z" stroke-width="4"/><path transform="translate(106.68 39.90)" d="M10.700 4.800L4.300 16.200" stroke-width="3"/><path transform="translate(122.76 39.90)" d="M5 2H10Q13 2 13 5V16Q13 19 10 19H5Q2 19 2 16V5Q2 2 5 2Z" stroke-width="4"/><path transform="translate(122.76 39.90)" d="M10.700 4.800L4.300 16.200" stroke-width="3"/><path transform="translate(146.10 39.90)" d="M1.100 10.800V0M5.600 10.800V0M1.100 1L3.350 6.500L5.600 1" stroke-width="2.2"/><path transform="translate(146.10 39.90)" d="M8.900 0V10.800M13.100 0V10.800M8.900 5.300H13.100" stroke-width="2.2"/><path transform="translate(146.10 39.90)" d="M16.200 4H23.100L16.700 9.800H23.600" stroke-width="2"/><path transform="translate(186.90 39.90)" d="M2.800 1.700H9.200" stroke-width="3.4"/><path transform="translate(186.90 39.90)" d="M7.200 0V21" stroke-width="4"/><path transform="translate(186.90 39.90)" d="M0 19.300H14.500" stroke-width="3.4"/><path transform="translate(202.98 39.90)" d="M10.700 0V21" stroke-width="4"/><path transform="translate(202.98 39.90)" d="M9.600 1.300L1.900 15.400" stroke-width="3.6"/><path transform="translate(202.98 39.90)" d="M0.300 16.300H15" stroke-width="3.4"/><path transform="translate(219.06 39.90)" d="M10.700 0V21" stroke-width="4"/><path transform="translate(219.06 39.90)" d="M9.600 1.300L1.900 15.400" stroke-width="3.6"/><path transform="translate(219.06 39.90)" d="M0.300 16.300H15" stroke-width="3.4"/><path transform="translate(235.14 39.90)" d="M4.600 19.400H10.200" stroke-width="3.2"/><path transform="translate(251.22 39.90)" d="M0.800 2H11.700L6.800 9.500H10Q13 9.500 13 12.500V16Q13 19 10 19H0.800" stroke-width="4"/><path transform="translate(274.20 39.90)" d="M1 0L2.400 9.800L4.050 3.500L5.700 9.800L7.100 0" stroke-width="2"/></g></svg>
<svg class="a" style="left:560px;top:1560px;" width="360" height="240" viewBox="0 0 360 240" fill="none" stroke-linecap="round" stroke-linejoin="round"><path d="M65.100 207.600L300.600 68.400M191.600 46.600L300.600 68.400L273.900 166.600" stroke="#fff" stroke-width="46.500"/></svg>
</body></html>
